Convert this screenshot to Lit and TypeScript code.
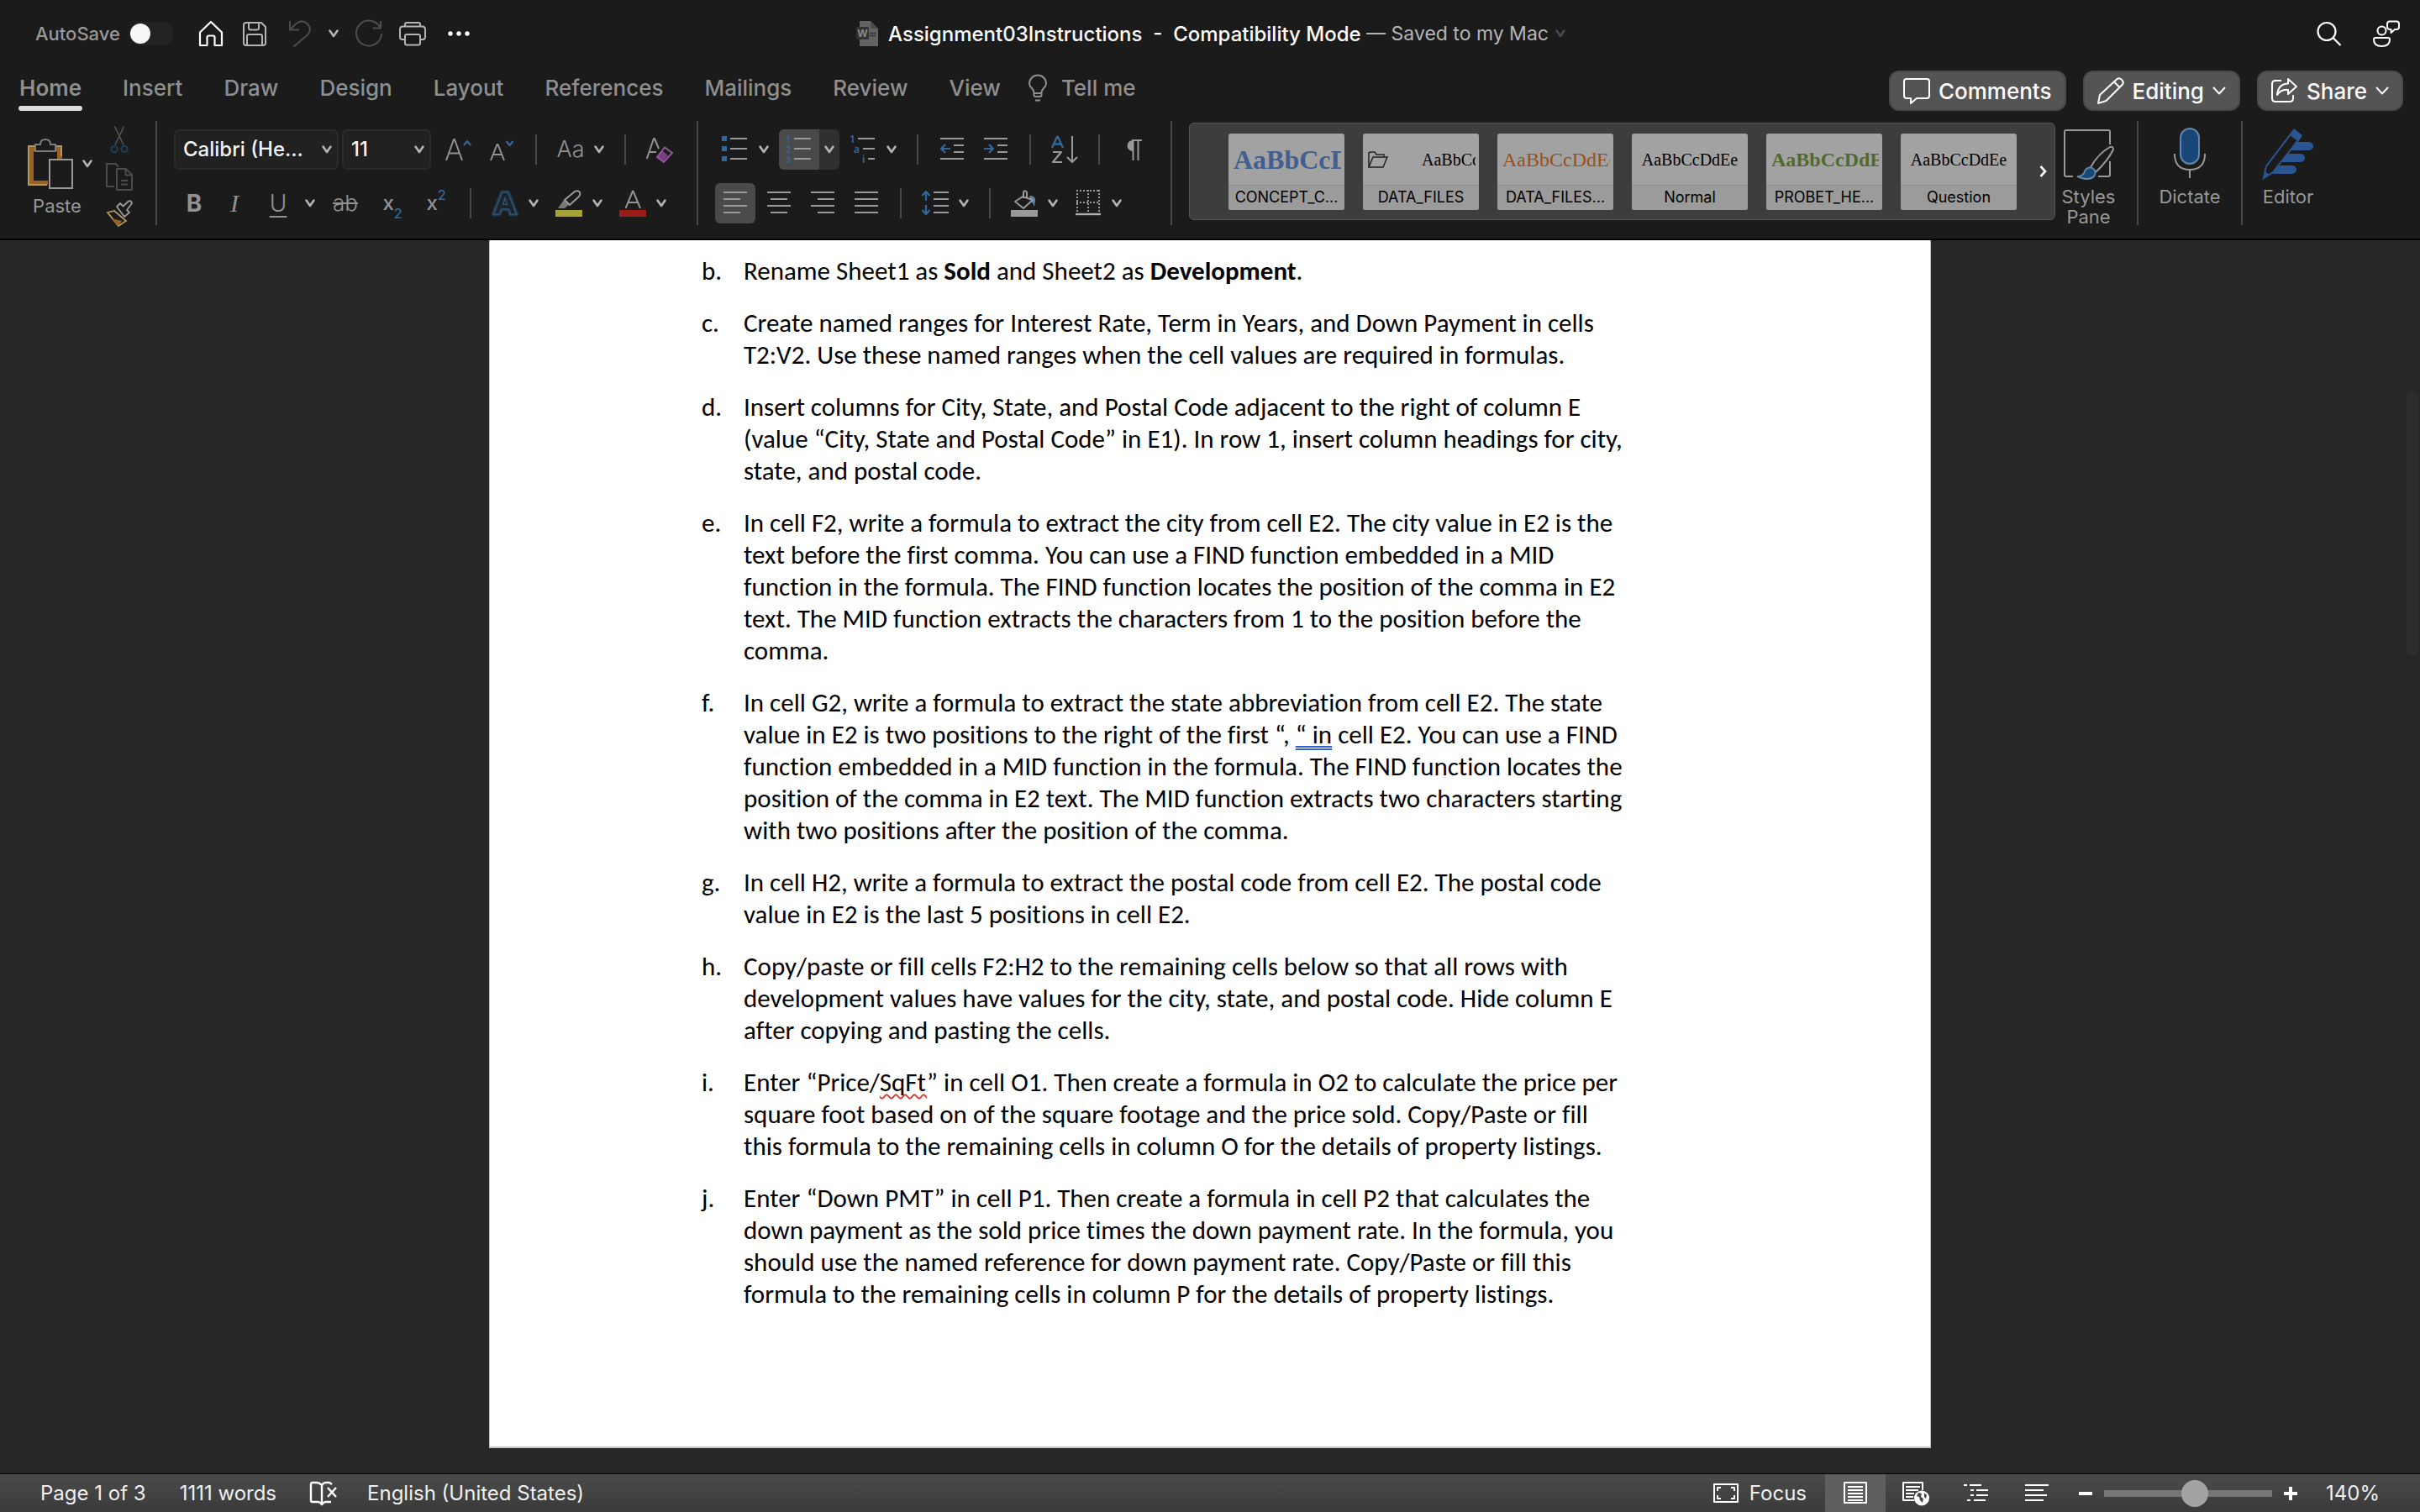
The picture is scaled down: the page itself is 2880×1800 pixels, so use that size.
import { LitElement, html, svg, css, TemplateResult } from "lit";
import { customElement, state } from "lit/decorators.js";
import { classMap } from "lit/directives/class-map.js";

/* ---------- icon drawings ---------- */

const chevron = html`<svg class="chev" viewBox="0 0 12 32" aria-hidden="true">
  <path d="M1.5 12.5L6 19L10.5 12.5" fill="none" stroke="currentColor" stroke-width="2.6" stroke-linecap="round" stroke-linejoin="round"/></svg>`;

const wideChevron = html`<svg class="wide-chev" viewBox="0 0 16 32" aria-hidden="true">
  <path d="M1.5 12.5L8 19.5L14.5 12.5" fill="none" stroke="currentColor" stroke-width="2" stroke-linecap="round" stroke-linejoin="round"/></svg>`;

const icon = (body: unknown) => html`<svg class="ico" viewBox="0 0 32 32" aria-hidden="true">${body}</svg>`;

const line = (d: string, color = "#999", w = 2) =>
  svg`<path d=${d} fill="none" stroke=${color} stroke-width=${w} stroke-linejoin="round"/>`;

const BLUE = "#33679a";

const icons = {
  home: icon(line("M3 14.5L16 2L29 14.5V30H20.500V20.500Q20.500 18.500 18.500 18.500H13.500Q11.500 18.500 11.500 20.500V30H3Z", "#fff", 2.200)),
  save: icon(svg`${line("M6 3H24L29 8V27Q29 30 26 30H6Q3 30 3 27V6Q3 3 6 3Z", "#b4b4b4")}
    ${line("M9 3V9Q9 11.500 11.500 11.500H18.500Q21 11.500 21 9V3M7 30V19Q7 17 9 17H23Q25 17 25 19V30", "#b4b4b4")}`),
  undo: icon(line("M2 1V11.500H13M2.500 11L9 4.500Q16 -1.500 22.500 4Q29 11 23 17.500L6.500 31.500", "#4d4d4d")),
  redo: icon(line("M30 1V9.500H20.500M29.500 9A15 15 0 1 0 31 16", "#4d4d4d")),
  print: icon(svg`${line("M7 7V5Q7 3 9 3H23Q25 3 25 5V7", "#b4b4b4")}
    ${line("M7 23H4Q1 23 1 20V11Q1 7.500 4.500 7.500H27.500Q31 7.500 31 11V20Q31 23 28 23H25", "#b4b4b4")}
    ${line("M9 17H23Q25 17 25 19V27Q25 29.500 23 29.500H9Q7 29.500 7 27V19Q7 17 9 17Z", "#b4b4b4")}`),
  more: icon(svg`<circle cx="5" cy="16" r="2.700" fill="#fff"/><circle cx="15" cy="16" r="2.700" fill="#fff"/><circle cx="25" cy="16" r="2.700" fill="#fff"/>`),
  search: icon(line("M13 3A10.500 10.500 0 1 0 13 24A10.500 10.500 0 1 0 13 3M20.500 21L29.500 30", "#fff", 2.200)),
  persona: icon(svg`<circle cx="10.500" cy="12.500" r="5" fill="none" stroke="#fff" stroke-width="2"/>
    ${line("M3 21H18Q20 21 20 23Q20 31 10.500 31Q1 31 1 23Q1 21 3 21Z", "#fff")}
    ${line("M20 1.500H28Q31 1.500 31 4.500V8Q31 11 28 11H26L21.500 15V11H20.500Q17 11 17 8V4.500Q17 1.500 20 1.500Z", "#fff")}`),
  bulb: icon(svg`${line("M11.500 24V21Q11.500 19 9 16Q6 13 6 10.500A10 10 0 0 1 26 10.500Q26 13 23 16Q20.500 19 20.500 21V24Q20.500 26 18.500 26H13.500Q11.500 26 11.500 24ZM11.500 22H20.500M13 30.500H19", "#8e8e8e")}`),
  comment: icon(line("M4 2H28Q31 2 31 5V22Q31 25 28 25H16L9 31V25H4Q1 25 1 22V5Q1 2 4 2Z", "#fff")),
  pencil: icon(line("M1 31L3 21L23.500 2Q26 0 29 3Q32 6 30 8.500L10.500 28ZM20 5.500L26.500 12", "#fff")),
  share: icon(svg`${line("M12 4H5Q1 4 1 8V25Q1 29 5 29H22Q26 29 26 25V21", "#fff")}
    ${line("M20 2L30 11L20 20V15Q11 14 7 21Q8 8 20 7.500Z", "#fff")}`),
  cut: icon(svg`${line("M10.500 0.500L21 22.500M21.500 0.500L11 22.500", "#555", 1.600)}
    <circle cx="10" cy="27.500" r="3.600" fill="none" stroke="#1f3f58" stroke-width="2"/><circle cx="22" cy="27.500" r="3.600" fill="none" stroke="#1f3f58" stroke-width="2"/>`),
  copy: icon(svg`${line("M10 28H1V1H11.500L15 4.500", "#4b4b4b")}${line("M13 7H24L31 14V32H13ZM23.500 7V14.500H31M18 21H26M18 25.500H26", "#4b4b4b")}`),
  brush: icon(svg`<path d="M2 15L10 13L24 25L15 31Z" fill="#1b1b1b" stroke="#b3985a" stroke-width="1.800"/><path d="M6 22L19 25L15 31Z" fill="#9a6122"/>
    ${line("M13 8L17 4L20.500 7.500L27 1.500Q30 0 31 4L25 12L28 15L22 20Z", "#999", 1.800)}`),
  grow: icon(svg`${line("M2 29L11 4H12L21 29M5 20.500H18", "#929292")}${line("M23 11L27 6L31 11", BLUE, 2.200)}`),
  shrink: icon(svg`${line("M3 29L10.500 10H11.500L19 29M5.500 22H16.500", "#929292")}${line("M21.500 6L25.500 11L29.500 6", BLUE, 2.200)}`),
  clear: icon(svg`${line("M0.800 27L9 3H10L15 15M4 19H12", "#929292")}
    <path d="M13 24L19 17L26 23L20 31Z" fill="#7d3d84"/><path d="M13 25L22 13.500L31 20L21 31Z" fill="none" stroke="#8e5b97" stroke-width="2"/>`),
  outlineA: icon(svg`${line("M2.500 29L12.500 3H19.500L29.500 29H22.500L20.500 23H11.500L9.500 29Z", "#1d3850", 5)}<path d="M2.500 29L12.500 3H19.500L29.500 29H22.500L20.500 23H11.500L9.500 29ZM13.500 17.500H18.500L16 10Z" fill="#1b2530" fill-rule="evenodd" stroke="#37536b" stroke-width="1.600"/>`),
  highlight: icon(svg`<rect x="0" y="24" width="32" height="8" fill="#a3a336"/>
    <path d="M3 22L10 12L17 17L11 22Z" fill="#777"/>${line("M11 12L23 2Q27 0 29 3Q30 5 28 8L17 18Z", "#999")}`),
  fontColor: icon(svg`<rect x="0" y="24" width="32" height="8" fill="#9c1c17"/>${line("M7.500 22L16 1.500H16.500L25 22M10.500 15H22", "#929292")}`),
  bullets: icon(svg`<path d="M0 0h6v6h-6zM0 12h6v6h-6zM0 24h6v6h-6z" fill=${BLUE}/>${line("M10 3H30M10 15H30M10 27H30", "#999")}`),
  numbers: icon(svg`<g font-family="Noto Sans, sans-serif" font-size="11" font-weight="600" fill=${BLUE}><text x="0" y="8">1</text><text x="0" y="20">2</text><text x="0" y="32">3</text></g>${line("M10 3H30M10 15H30M10 27H30", "#999")}`),
  multi: icon(svg`<g font-family="Noto Sans, sans-serif" font-size="12" font-weight="600" fill=${BLUE}><text x="0" y="8">1</text><text x="5" y="20">a</text><text x="15" y="32">i</text></g>${line("M10 3H30M16 15H30M22 27H30", "#999")}`),
  outdent: icon(svg`${line("M2 3H30M18 11H30M18 19H30M2 27H30", "#999")}${line("M14 15H3M8 10L3 15L8 20", BLUE, 2.200)}`),
  indent: icon(svg`${line("M2 3H30M18 11H30M18 19H30M2 27H30", "#999")}${line("M2 15H13M8 10L13 15L8 20", BLUE, 2.200)}`),
  sort: icon(svg`${line("M1 14L7 1H8L14 14M3 9.500H12", BLUE, 2.400)}${line("M2 19H12L2 31H13", "#999", 2.200)}${line("M25 0V31M19 25L25 31L31 25", "#999")}`),
  pilcrow: icon(svg`<path d="M15 5A6.500 6.500 0 0 0 15 18Z" fill="#999"/>${line("M14 5H26M15.500 5V29M21.500 5V29", "#999")}`),
  left: icon(line("M2 3H30M2 11H22M2 19H30M2 27H22", "#999")),
  center: icon(line("M2 3H30M6 11H26M2 19H30M6 27H26", "#999")),
  right: icon(line("M2 3H30M10 11H30M2 19H30M10 27H30", "#999")),
  justify: icon(line("M2 3H30M2 11H30M2 19H30M2 27H30", "#999")),
  spacing: icon(svg`${line("M14 3H32M14 11H32M14 19H32M14 27H32", "#999")}${line("M5 2V13M5 18V29M0.500 7L5 2L9.500 7M0.500 24L5 29L9.500 24", BLUE, 2.200)}`),
  bucket: icon(svg`<rect x="0" y="24" width="32" height="8" fill="#999"/><path d="M22 7Q29 7 29 12L28 20Q26 15 23 12Z" fill="#5f87ad"/>
    ${line("M14 8L5 14L15 22L26 12ZM15 10V2.500Q17.500 0 19 3V11", "#999")}`),
  borders: icon(svg`<path d="M2 1H30M3 0V26M29 0V26M16 0V26M2 15H30" fill="none" stroke="#999" stroke-width="2" stroke-dasharray="2 2"/>${line("M1 29H31", "#b0b0b0", 2.400)}`),
  proof: icon(svg`${line("M14 6Q11 3 8 3H3Q1 3 1 5V24Q1 26 3 26H9Q12 26 14 29Q16 26 19 26H25", "#fff", 2.400)}${line("M14 29V6Q16 3 19 3H23L26 5M21 9L31 20M31 9L21 20", "#fff", 2.400)}`),
  focus: icon(svg`${line("M2 5H30V26H2Z", "#fff")}${line("M6 13V9H10M22 9H26V13M26 18V22H22M10 22H6V18", "#fff")}`),
  printLayout: icon(svg`${line("M3 3H29V27H3Z", "#fff")}${line("M7 8H25M7 12H25M7 16H25M7 20H25M7 24H25", "#fff")}`),
  web: icon(svg`${line("M14 24H1V3H24V12", "#fff")}${line("M4 8H21M4 12H19M4 16H14M4 20H13", "#fff")}<circle cx="23" cy="21.500" r="9" fill="#fff"/>
    <path d="M19 15L23 16L22 20L25 22L24 27L21 24L20 20L17 19ZM26 15L29 18L28 22L26 20Z" fill="#484848"/>`),
  outline: icon(line("M1 6H5M8 6H22M9 12H13M16 12H30M9 18H13M16 18H30M5 24H9M13 24H27", "#fff")),
  draft: icon(line("M2 6H30M2 12H24M2 18H28M2 24H24", "#fff")),
};

const glyph = (text: unknown, cls: string) => html`<span class="ico glyph ${cls}">${text}</span>`;
const sub = html`x<sub>2</sub>`;
const sup = html`x<sup>2</sup>`;

const bigIcons = {
  paste: html`<svg class="big-ico" viewBox="0 0 56 60" aria-hidden="true">
    <path d="M2 9H42V24H36V15H8V50H25V55H2Z" fill="#9a6122"/>
    <path d="M9 9H2V55H24M34 9H41V21" fill="none" stroke="#b3985a" stroke-width="2"/>
    <path d="M10 15V7H16Q16 1 22 1Q28 1 28 7H34V15Z" fill="#1b1b1b" stroke="#7c7c7c" stroke-width="2"/>
    <path d="M27 25H54V59H27Z" fill="#1b1b1b" stroke="#999" stroke-width="2"/></svg>`,
  styles: html`<svg class="big-ico wide" viewBox="0 0 62 60" aria-hidden="true">
    <path d="M12 56H4Q2 56 2 54V3Q2 1 4 1H54Q56 1 56 3V18M56 38V54Q56 56 54 56H42" fill="none" stroke="#999" stroke-width="2"/>
    <path d="M33 45Q42 29 56 21Q60 20 60 24Q53 38 39 51" fill="#1b1b1b" stroke="#999" stroke-width="2"/>
    <path d="M17 56Q24 56 26 50Q29 44 35 46Q41 50 37 56Q31 62 17 56Z" fill="#1a4577" stroke="#5e86ab" stroke-width="2"/></svg>`,
  mic: html`<svg class="big-ico" viewBox="0 0 56 60" aria-hidden="true">
    <rect x="17" y="-1" width="22" height="42" rx="11" fill="#1a4577" stroke="#5e86ab" stroke-width="2"/>
    <path d="M10 29V31Q11 48 28 48Q45 48 46 31V29M28 48V58" fill="none" stroke="#999" stroke-width="2"/></svg>`,
  editor: html`<svg class="big-ico wide" viewBox="0 0 62 60" aria-hidden="true">
    <path d="M2 58L5 44L37 2L46 9L13 51Z" fill="#1b1b1b" stroke="#2a5590" stroke-width="2"/>
    <path d="M38 -1L48 7L43 14L33 7ZM1 59L3 50L9 54Z" fill="#2a5590"/>
    <path d="M40 15H56a5 5 0 0 1 0 10H34ZM30 29H46a5 5 0 0 1 0 10H23ZM20 43H36a5 5 0 0 1 0 10H12Z" fill="#2a5590"/></svg>`,
};

/* ---------- document data ---------- */

const tabs = ["Home", "Insert", "Draw", "Design", "Layout", "References", "Mailings", "Review", "View"];

const gallery = [
  { name: "CONCEPT_C...", kind: "concept", folder: false },
  { name: "DATA_FILES", kind: "files", folder: true },
  { name: "DATA_FILES...", kind: "orange", folder: false },
  { name: "Normal", kind: "normal", folder: false },
  { name: "PROBET_HE...", kind: "green", folder: false },
  { name: "Question", kind: "normal", folder: false },
];

const steps: { mark: string; lines: unknown[] }[] = [
  { mark: "b.", lines: [html`Rename Sheet1 as <b>Sold</b> and Sheet2 as <b>Development</b>.`] },
  { mark: "c.", lines: [
    "Create named ranges for Interest Rate, Term in Years, and Down Payment in cells",
    "T2:V2. Use these named ranges when the cell values are required in formulas."] },
  { mark: "d.", lines: [
    "Insert columns for City, State, and Postal Code adjacent to the right of column E",
    "(value “City, State and Postal Code” in E1). In row 1, insert column headings for city,",
    "state, and postal code."] },
  { mark: "e.", lines: [
    "In cell F2, write a formula to extract the city from cell E2. The city value in E2 is the",
    "text before the first comma. You can use a FIND function embedded in a MID",
    "function in the formula. The FIND function locates the position of the comma in E2",
    "text. The MID function extracts the characters from 1 to the position before the",
    "comma."] },
  { mark: "f.", lines: [
    "In cell G2, write a formula to extract the state abbreviation from cell E2. The state",
    html`value in E2 is two positions to the right of the first “, <span class="grammar">“ in</span> cell E2. You can use a FIND`,
    "function embedded in a MID function in the formula. The FIND function locates the",
    "position of the comma in E2 text. The MID function extracts two characters starting",
    "with two positions after the position of the comma."] },
  { mark: "g.", lines: [
    "In cell H2, write a formula to extract the postal code from cell E2. The postal code",
    "value in E2 is the last 5 positions in cell E2."] },
  { mark: "h.", lines: [
    "Copy/paste or fill cells F2:H2 to the remaining cells below so that all rows with",
    "development values have values for the city, state, and postal code. Hide column E",
    "after copying and pasting the cells."] },
  { mark: "i.", lines: [
    html`Enter “Price/<span class="spelling">SqFt</span>” in cell O1. Then create a formula in O2 to calculate the price per`,
    "square foot based on of the square footage and the price sold. Copy/Paste or fill",
    "this formula to the remaining cells in column O for the details of property listings."] },
  { mark: "j.", lines: [
    "Enter “Down PMT” in cell P1. Then create a formula in cell P2 that calculates the",
    "down payment as the sold price times the down payment rate. In the formula, you",
    "should use the named reference for down payment rate. Copy/Paste or fill this",
    "formula to the remaining cells in column P for the details of property listings."] },
];

const base = css`
  :host, * { box-sizing: border-box; }
  button { appearance: none; border: 0; background: none; padding: 0; margin: 0; font: inherit; color: inherit; display: flex; align-items: center; }
  svg { display: block; flex: none; overflow: visible; }
  .ico { width: 32px; height: 32px; flex: none; }
  .chev { width: 12px; height: 32px; color: #b4b4b4; }
  .wide-chev { width: 16px; height: 32px; }
`;

/* ---------- title bar ---------- */

@customElement("title-bar")
class TitleBar extends LitElement {
  static styles = [base, css`
    :host { display: grid; grid-template-columns: 1fr auto 1fr; align-items: center; height: 80px; padding: 0 24px 0 42px; font-size: 22px; color: #989898; }
    .left, .right, .title { display: flex; align-items: center; }
    .left { gap: 20px; }
    .autosave { display: flex; align-items: center; gap: 10px; margin-right: 8px; font-weight: 500; }
    .autosave span { min-width: 100px; }
    .switch { appearance: none; margin: 0; width: 54px; height: 28px; border-radius: 14px; background: #232323; display: flex; align-items: center; padding: 2px; }
    .switch::before { content: ""; width: 24px; height: 24px; border-radius: 50%; background: #f8f8f8; }
    .switch:checked { justify-content: flex-end; }
    .pair { display: flex; gap: 16px; padding-left: 4px; }
    .more { padding-left: 4px; }
    .title { font-size: 24px; font-weight: 500; color: #fff; white-space: pre; padding-right: 16px; }
    .title .doc { width: 26px; height: 30px; margin-right: 12px; }
    .name { margin: 0; font: inherit; }
    .saved { color: #b5b5b5; font-weight: 400; font-size: 23px; }
    .title .chev { color: #4a4a4a; margin-left: 8px; }
    .right { justify-content: flex-end; gap: 36px; }
  `];
  render() {
    return html`
      <div class="left">
        <label class="autosave"><span>AutoSave</span><input class="switch" type="checkbox" role="switch"></label>
        <button aria-label="Home">${icons.home}</button>
        <button aria-label="Save">${icons.save}</button>
        <span class="pair"><button aria-label="Undo">${icons.undo}</button><button aria-label="Undo options">${chevron}</button></span>
        <button aria-label="Redo">${icons.redo}</button>
        <button aria-label="Print">${icons.print}</button>
        <button class="more" aria-label="More">${icons.more}</button>
      </div>
      <div class="title">
        <svg class="doc" viewBox="0 0 26 30" aria-hidden="true"><path d="M4 0H17L26 9V30H4Z" fill="#636363"/><path d="M17 0V9H26Z" fill="#4a4a4a"/>
          <path d="M16 14.500H23M16 17.500H23" stroke="#333" stroke-width="1.500"/><rect y="7" width="15" height="15" rx="1.500" fill="#333"/>
          <text x="7.500" y="19" text-anchor="middle" font-family="Inter, sans-serif" font-size="12" font-weight="700" fill="#888">W</text></svg>
        <h1 class="name">Assignment03Instructions  -  Compatibility Mode</h1><span class="saved"> — Saved to my Mac</span>${chevron}
      </div>
      <div class="right">
        <button aria-label="Search">${icons.search}</button>
        <button aria-label="Account">${icons.persona}</button>
      </div>`;
  }
}

/* ---------- tab strip ---------- */

@customElement("tab-strip")
class TabStrip extends LitElement {
  @state() active = "Home";
  static styles = [base, css`
    :host { display: flex; align-items: flex-start; justify-content: space-between; padding: 4px 20px 0 22px; height: 56px; }
    nav { display: flex; gap: 47px; font-size: 26px; line-height: 42px; font-weight: 500; color: #8e8e8e; }
    .tab { flex-direction: column; align-items: stretch; padding: 0 1px; }
    .tab::after { content: ""; height: 6px; border-radius: 3px; margin: 0 -1px; }
    .tab.on { font-weight: 600; }
    .tab.on::after { background: #dcdcdc; }
    .tell { gap: 12px; margin-left: -20px; height: 42px; }
    .actions { display: flex; gap: 20px; color: #fff; font-size: 26px; font-weight: 500; }
    .action { height: 48px; padding: 0 15px; gap: 10px; border-radius: 12px; background: #545454; border: 2px solid #494949; }
  `];
  render() {
    return html`
      <nav>
        ${tabs.map((t) => html`<button class=${classMap({ tab: true, on: t === this.active })} @click=${() => (this.active = t)}>${t}</button>`)}
        <button class="tell">${icons.bulb}Tell me</button>
      </nav>
      <div class="actions">
        <button class="action">${icons.comment}Comments</button>
        <button class="action">${icons.pencil}Editing${wideChevron}</button>
        <button class="action">${icons.share}Share${wideChevron}</button>
      </div>`;
  }
}

/* ---------- ribbon ---------- */

@customElement("tool-ribbon")
class ToolRibbon extends LitElement {
  static styles = [base, css`
    :host { display: flex; align-items: stretch; height: 150px; padding: 8px 0 16px; border-bottom: 2px solid #000; color: #989898; font-size: 22px; line-height: 24px; }
    .rule { width: 2px; flex: none; background: #474747; }
    .group { flex: none; padding: 10px 28px 0 20px; display: flex; flex-direction: column; gap: 16px; }
    .row { display: flex; align-items: center; height: 48px; }
    .row > * { margin-left: 20px; }
    .row > :first-child { margin-left: 0; }
    .row > .lead { margin-left: 8px; }
    .row > .near { margin-left: 12px; }
    .row > .mid { margin-left: 16px; }
    .row > .far, .row > .bar { margin-left: 24px; }
    .row > .tight { margin-left: 4px; }
    .bar { width: 2px; height: 36px; background: #474747; }
    .row > .bar + * { margin-left: 24px; }

    .clip { flex: none; width: 185px; padding-left: 24px; display: flex; gap: 14px; }
    .paste { width: 88px; display: block; padding-top: 10px; text-align: center; }
    .paste-top { display: flex; align-items: center; gap: 10px; padding-left: 8px; height: 60px; margin-bottom: 8px; }
    .side { display: flex; flex-direction: column; gap: 12px; padding-top: 6px; }
    .big-ico { width: 56px; height: 60px; }
    .big-ico.wide { width: 62px; }

    .combo { display: grid; align-items: center; height: 48px; border: 2px solid #2a2a2a; border-radius: 6px; background: #212121; }
    .combo > * { grid-area: 1 / 1; }
    .combo .chev { justify-self: end; margin-right: 6px; pointer-events: none; }
    .combo.font { width: 196px; }
    .combo.size { width: 106px; }
    select { appearance: none; border: 0; margin: 0; background: none; color: #f4f4f4; font: 500 24px/40px Inter, sans-serif; padding: 0 0 0 9px; width: 100%; }

    .glyph { display: flex; align-items: center; justify-content: center; font-size: 28px; line-height: 32px; color: #929292; }
    .bold { font-weight: 700; }
    .italic { font: italic 30px/32px "Liberation Serif", serif; }
    .under { text-decoration: underline; text-underline-offset: 5px; text-decoration-thickness: 2px; font-weight: 300; }
    .strike { text-decoration: line-through; font-weight: 300; font-size: 26px; }
    .script { font-weight: 500; font-size: 24px; }
    .case { font-weight: 300; font-size: 27px; }
    sub, sup { font-size: 16px; color: #33679a; line-height: 0; align-self: flex-end; margin-bottom: 4px; }
    sup { align-self: flex-start; margin: 6px 0 0; }

    .split { width: 72px; height: 48px; border-radius: 6px; background: #303030; display: flex; align-items: center; overflow: hidden; }
    .split .main { width: 48px; height: 48px; justify-content: center; background: #4a4a4a; }
    .split .chev { margin-left: 6px; }
    .pressed { width: 48px; height: 48px; border-radius: 6px; background: #4a4a4a; justify-content: center; }

    .gallery { flex: 1; min-width: 0; margin: 2px 0 6px 20px; padding: 12px 0 0 46px; background: #3d3d3d; border: 1px solid #555; border-radius: 6px; display: flex; align-items: flex-start; gap: 22px; overflow: hidden; }
    .card { width: 138px; height: 91px; flex: none; display: flex; flex-direction: column; align-items: stretch; border-radius: 3px; background: #a2a2a2; color: #000; overflow: hidden; }
    .sample { height: 61px; margin: 0 4px; padding: 0 2px; display: flex; align-items: center; gap: 40px; overflow: hidden; white-space: nowrap; font-family: "Liberation Serif", serif; line-height: 36px; }
    .label { height: 30px; font-size: 18px; line-height: 28px; text-align: center; border-top: 1px solid #8c8c8c; background: #9b9b9b; }
    .concept { font-size: 32px; font-weight: 700; color: #41608f; }
    .files { font-size: 20px; }
    .orange { font-size: 24px; color: #98511f; }
    .green { font-size: 24px; font-weight: 700; color: #53682f; }
    .normal { font-size: 20px; justify-content: center; }
    .folder { width: 24px; height: 20px; }
    .next { margin-left: auto; margin-right: 6px; width: 28px; height: 90px; justify-content: center; color: #fff; }
    .next svg { width: 10px; height: 14px; }

    .big { flex: none; width: 122px; flex-direction: column; padding-top: 10px; align-items: center; text-align: center; gap: 8px; }
    .big.pane { width: 97px; padding-right: 18px; }
    .big.editor { width: 211px; padding-right: 103px; }
  `];
  private bar = html`<span class="bar"></span>`;
  private tool(label: string, body: TemplateResult, cls = "") {
    return html`<button class=${cls} aria-label=${label}>${body}</button>`;
  }
  private drop(label: string) {
    return html`<button class="near" aria-label="${label} options">${chevron}</button>`;
  }
  render() {
    const t = this.tool;
    return html`
      <div class="clip">
        <button class="paste"><span class="paste-top">${bigIcons.paste}${chevron}</span>Paste</button>
        <div class="side">${t("Cut", icons.cut)}${t("Copy", icons.copy)}${t("Format painter", icons.brush)}</div>
      </div>
      <span class="rule"></span>
      <div class="group">
        <div class="row">
          <label class="combo font"><select aria-label="Font"><option>Calibri (He...</option></select>${chevron}</label>
          <label class="combo size tight"><select aria-label="Font size"><option>11</option></select>${chevron}</label>
          ${t("Grow font", icons.grow, "mid")}${t("Shrink font", icons.shrink)}${this.bar}
          ${t("Change case", glyph("Aa", "case"))}${this.drop("Case")}${this.bar}
          ${t("Clear formatting", icons.clear)}
        </div>
        <div class="row">
          <span></span>${t("Bold", glyph("B", "bold"), "lead")}${t("Italic", glyph("I", "italic"), "mid")}${t("Underline", glyph("U", "under"))}${html`<button class="mid" aria-label="Underline options">${chevron}</button>`}
          ${t("Strikethrough", glyph("ab", "strike"))}${t("Subscript", glyph(sub, "script"), "far")}${t("Superscript", glyph(sup, "script"))}
          ${this.bar}
          ${t("Text effects", icons.outlineA)}${this.drop("Text effects")}
          ${t("Highlight", icons.highlight)}${this.drop("Highlight")}
          ${t("Font color", icons.fontColor)}${this.drop("Font color")}
        </div>
      </div>
      <span class="rule"></span>
      <div class="group">
        <div class="row">
          <span></span>${t("Bullets", icons.bullets, "lead")}${this.drop("Bullets")}
          <span class="split near">${t("Numbering", icons.numbers, "main")}<button aria-label="Numbering options">${chevron}</button></span>
          ${t("Multilevel list", icons.multi, "near")}${this.drop("Multilevel")}${this.bar}
          ${t("Decrease indent", icons.outdent)}${t("Increase indent", icons.indent)}${this.bar}
          ${t("Sort", icons.sort)}${this.bar}
          ${t("Show marks", icons.pilcrow)}
        </div>
        <div class="row">
          ${t("Align left", icons.left, "pressed")}${t("Center", icons.center, "near")}${t("Align right", icons.right)}${t("Justify", icons.justify)}${this.bar}
          ${t("Line spacing", icons.spacing)}${this.drop("Line spacing")}${this.bar}
          ${t("Shading", icons.bucket)}${this.drop("Shading")}
          ${t("Borders", icons.borders)}${this.drop("Borders")}
        </div>
      </div>
      <span class="rule"></span>
      <div class="gallery">
        ${gallery.map((g) => html`<button class="card">
          <span class="sample ${g.kind}">${g.folder ? html`<svg class="folder" viewBox="0 0 24 20" aria-hidden="true"><path d="M1 19V2L3 1H8L10 4H19V7M1 19L6 7H23L18 19Z" fill="none" stroke="#222" stroke-width="1.500"/></svg>` : ""}<span>AaBbCcDdEe</span></span>
          <span class="label">${g.name}</span></button>`)}
        <button class="next" aria-label="More styles"><svg viewBox="0 0 10 14"><path d="M2.500 1L8 7L2.500 13" fill="none" stroke="currentColor" stroke-width="2.600"/></svg></button>
      </div>
      <button class="big pane">${bigIcons.styles}<span>Styles<br>Pane</span></button>
      <span class="rule"></span>
      <button class="big">${bigIcons.mic}<span>Dictate</span></button>
      <span class="rule"></span>
      <button class="big editor">${bigIcons.editor}<span>Editor</span></button>`;
  }
}

/* ---------- document ---------- */

@customElement("doc-canvas")
class DocCanvas extends LitElement {
  static styles = [base, css`
    :host { display: flex; flex: 1; position: relative; justify-content: center; align-items: flex-start; background: #272727; padding-bottom: 30px; }
    .page { width: 100%; max-width: 1716px; background: #fff; border: solid #c4c4c4; border-width: 0 1px 2px; padding: 17px 252px 163px; color: #000; font: 31px/38px Carlito, Lato, sans-serif; font-variant-ligatures: none; }
    ol { list-style: none; margin: 0; padding: 0; display: flex; flex-direction: column; gap: 24px; }
    li { display: grid; grid-template-columns: 50px 1fr; }
    p { margin: 0; white-space: nowrap; }
    .grammar { text-decoration: underline double #2f62d9 2px; text-underline-offset: 3px; text-decoration-skip-ink: none; }
    .spelling { text-decoration: underline wavy #d93a2f 2px; text-underline-offset: 3px; text-decoration-skip-ink: none; }
    .thumb { position: absolute; right: 2px; top: 179px; width: 14px; height: 316px; border-radius: 7px; background: #2d2d2d; }
  `];
  render() {
    return html`
      <main class="page"><ol>
        ${steps.map((s) => html`<li><span>${s.mark}</span><p>${s.lines.map((l, i) => (i ? html`<br>${l}` : l))}</p></li>`)}
      </ol></main>
      <span class="thumb"></span>`;
  }
}

/* ---------- status bar ---------- */

@customElement("status-bar")
class StatusBar extends LitElement {
  static styles = [base, css`
    :host { display: flex; align-items: center; justify-content: space-between; height: 46px; border-top: 1px solid #000; background: linear-gradient(#4b4b4b, #3a3a3a); color: #f0f0f0; font-size: 24px; padding: 0 48px; }
    .side { display: flex; align-items: center; height: 45px; }
    .left { gap: 40px; }
    .left .ico { margin-right: -4px; }
    .focus { gap: 12px; margin-right: 22px; }
    .view { height: 45px; width: 72px; justify-content: center; }
    .view.on { background: #5e5e5e; }
    .step { width: 20px; height: 32px; }
    .minus { margin-left: 12px; }
    .zoom { appearance: none; width: 200px; height: 32px; margin: 0 12px; background: linear-gradient(#777, #777) center / 100% 8px no-repeat; }
    .zoom::-webkit-slider-thumb { appearance: none; width: 32px; height: 32px; border-radius: 50%; background: #a3a3a3; }
    .percent { margin-left: 32px; }
  `];
  render() {
    return html`
      <div class="side left"><span>Page 1 of 3</span><span>1111 words</span><button aria-label="Proofing">${icons.proof}</button><span>English (United States)</span></div>
      <div class="side">
        <button class="focus">${icons.focus}Focus</button>
        <button class="view on" aria-label="Print layout">${icons.printLayout}</button>
        <button class="view" aria-label="Web layout">${icons.web}</button>
        <button class="view" aria-label="Outline">${icons.outline}</button>
        <button class="view" aria-label="Draft">${icons.draft}</button>
        <button class="minus" aria-label="Zoom out"><svg class="step" viewBox="0 0 20 32"><path d="M2 16H18" stroke="#fff" stroke-width="4"/></svg></button>
        <input class="zoom" type="range" aria-label="Zoom" min="0" max="100" value="55">
        <button aria-label="Zoom in"><svg class="step" viewBox="0 0 20 32"><path d="M2 16H18M10 8V24" stroke="#fff" stroke-width="4"/></svg></button>
        <span class="percent">140%</span>
      </div>`;
  }
}

@customElement("app-root")
class AppRoot extends LitElement {
  static styles = css`
    :host { display: flex; flex-direction: column; min-height: 100vh; background: #1b1b1b; font-family: Inter, sans-serif; }
  `;
  render() {
    return html`<title-bar></title-bar><tab-strip></tab-strip><tool-ribbon></tool-ribbon><doc-canvas></doc-canvas><status-bar></status-bar>`;
  }
}
